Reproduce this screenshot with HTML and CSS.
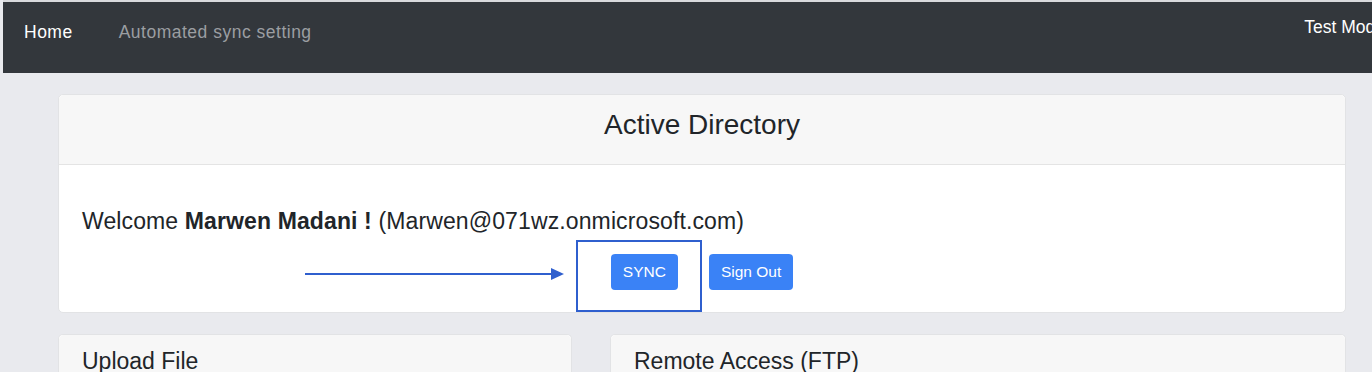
FILE: index.html
```html
<!DOCTYPE html>
<html lang="en">
<head>
    <meta charset="UTF-8">
    <meta name="viewport" content="width=device-width, initial-scale=1.0">
    <title>Active Directory</title>
    <link rel="stylesheet" href="styles.css">
</head>
<body>
    <nav class="navbar">
        <div class="nav-links">
            <a class="nav-link active" href="#">Home</a>
            <a class="nav-link" href="#">Automated sync setting</a>
        </div>
        <div class="nav-user">Test Mode</div>
    </nav>

    <main class="page">
        <section class="card">
            <div class="card-header centered">Active Directory</div>
            <div class="card-body">
                <p class="welcome">Welcome <strong>Marwen Madani !</strong> (Marwen@071wz.onmicrosoft.com)</p>
                <div class="actions">
                    <div class="sync-wrap">
                        <!-- annotation: arrow + highlight box -->
                        <svg class="arrow" width="260" height="12" viewBox="0 0 260 12">
                            <line x1="0" y1="6" x2="248" y2="6" stroke="#2f5fce" stroke-width="2"/>
                            <polygon points="246,0 259,6 246,12" fill="#2f5fce"/>
                        </svg>
                        <div class="highlight"></div>
                        <button class="btn">SYNC</button>
                    </div>
                    <button class="btn">Sign Out</button>
                </div>
            </div>
        </section>

        <div class="row">
            <section class="card">
                <div class="card-header">Upload File</div>
            </section>
            <section class="card">
                <div class="card-header">Remote Access (FTP)</div>
            </section>
        </div>
    </main>
</body>
</html>
```

FILE: styles.css
```css
html, body {
    overflow: hidden;
}
body {
    margin: 0;
    padding: 0 0 0 3px;
    height: 372px;
    font-family: "Liberation Sans", Arial, sans-serif;
    background-color: #e9eaee;
    color: #212529;
}
.navbar {
    display: flex;
    align-items: center;
    width: calc(100% + 13px);
    height: 73px;
    padding-left: 21px;
    box-sizing: border-box;
    background-color: #33373c;
    border-top: 2px solid #d9dadd;
    font-size: 17.5px;
    letter-spacing: 0.5px;
}
.nav-links {
    display: flex;
    gap: 46px;
    margin-top: -10px;
}
.nav-link {
    color: #9b9ea2;
    text-decoration: none;
}
.nav-link.active {
    color: #ffffff;
}
.nav-user {
    margin-left: auto;
    color: #ffffff;
    white-space: nowrap;
    letter-spacing: 0;
    margin-top: -20px;
}
.page {
    padding: 21px 26px 0 55px;
    display: flex;
    flex-direction: column;
    gap: 21px;
}
.card {
    background-color: #ffffff;
    border: 1px solid #e2e3e5;
    border-radius: 5px;
}
.card-header {
    background-color: #f7f7f7;
    border-bottom: 1px solid #e4e4e4;
    border-radius: 5px 5px 0 0;
    font-size: 23px;
    padding: 13px 23px;
    height: 44px;
}
.card-header.centered {
    text-align: center;
    font-size: 28px;
    padding: 14px 23px 0;
    height: 55px;
}
.card-body {
    padding: 43px 23px 22px;
}
.welcome {
    margin: 0 0 19px;
    font-size: 23px;
    letter-spacing: 0.12px;
}
.actions {
    display: flex;
    justify-content: center;
    gap: 31px;
}
.btn {
    font-family: "Liberation Sans", Arial, sans-serif;
    font-size: 15.5px;
    color: #ffffff;
    background-color: #3a82f6;
    border: none;
    border-radius: 4px;
    height: 36px;
    padding: 0 12px;
}
.sync-wrap {
    position: relative;
}
.highlight {
    position: absolute;
    left: -35px;
    top: -14px;
    width: 122px;
    height: 68px;
    border: 2px solid #2f5fce;
}
.arrow {
    position: absolute;
    left: -306px;
    top: 14px;
}
.row {
    display: grid;
    grid-template-columns: 514px 1fr;
    gap: 38px;
}
.row .card {
    border-bottom: none;
    height: 80px;
}
```
